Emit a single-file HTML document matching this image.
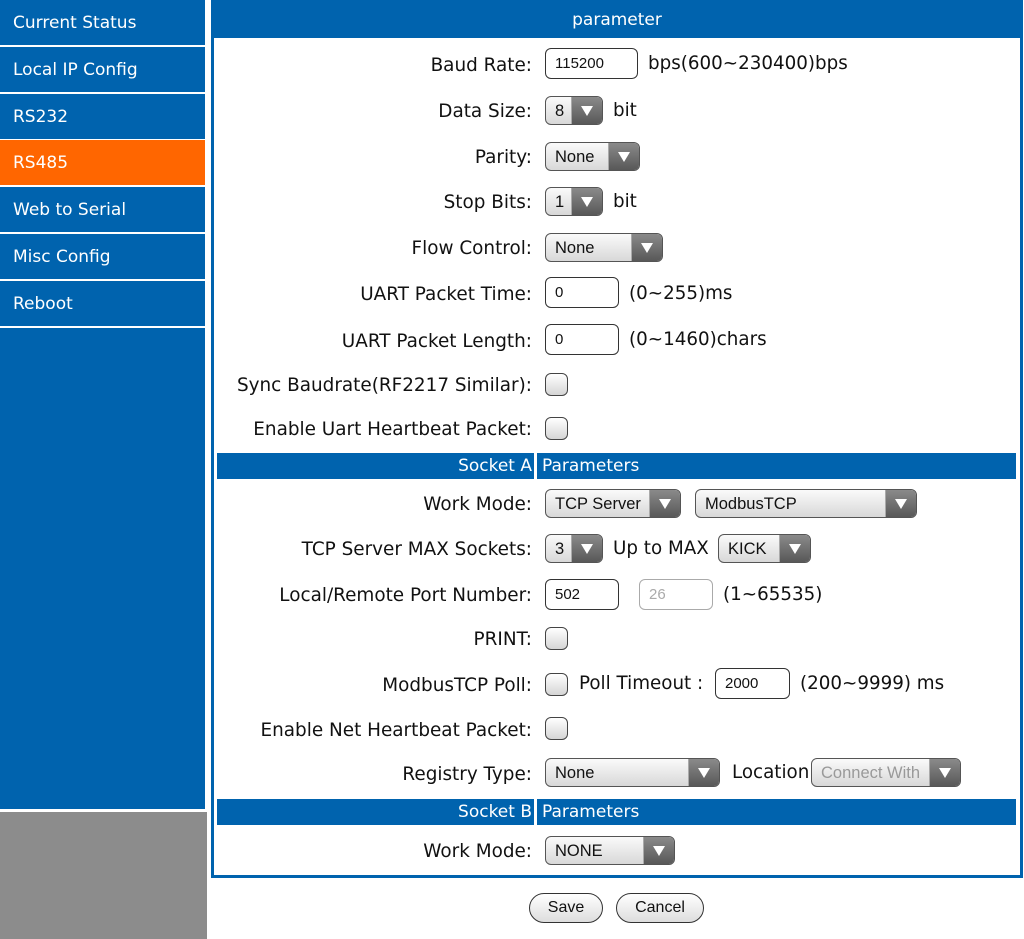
<!DOCTYPE html>
<html><head><meta charset="utf-8"><style>
*{margin:0;padding:0;box-sizing:border-box}
body{width:1024px;height:939px;background:#fff;position:relative;overflow:hidden;font-family:"DejaVu Sans","Liberation Sans",sans-serif;color:#111}
.nav{position:absolute;left:0;width:205px;height:45px;background:#0063ae;color:#fff;font-size:17px;line-height:46px;padding-left:13px}
.a{position:absolute}
.lbl{position:absolute;right:492px;font-size:18.4px;white-space:nowrap;margin-top:0}
.txt{position:absolute;font-size:18.3px;white-space:nowrap;margin-top:0}
.sel{position:absolute;height:29px;border:1px solid #555;border-radius:6px;background:linear-gradient(#fafafa,#d8d8d8);font-family:"Liberation Sans",sans-serif;font-size:16.5px;line-height:28px;padding-left:9px;overflow:hidden;color:#111}
.sel .ar{position:absolute;right:0;top:0;bottom:0;width:31px;background:linear-gradient(#8a8a8a,#585858);border-left:1px solid #aaa}
.sel .ar:after{content:"";position:absolute;left:9px;top:9px;border-left:6px solid transparent;border-right:6px solid transparent;border-top:10px solid #fff}
.inp{position:absolute;height:31px;border:1px solid #333;border-radius:6px;background:#fff;font-family:"Liberation Sans",sans-serif;font-size:15px;line-height:29px;padding-left:9px}
.cb{position:absolute;left:545px;width:23px;height:23px;border:1px solid #444;border-radius:6px;background:linear-gradient(#fff,#d5d5d5)}
.bar{position:absolute;left:217px;width:799px;height:26px;background:#0063ae;color:#fff;font-size:17px;line-height:26px}
.btn{position:absolute;top:893px;height:30px;border:1px solid #333;border-radius:15px;background:linear-gradient(#fff,#ddd);font-family:"Liberation Sans",sans-serif;font-size:16px;line-height:28px;text-align:center}
</style></head><body>
<div class="nav" style="top:0">Current Status</div>
<div class="nav" style="top:47px">Local IP Config</div>
<div class="nav" style="top:94px">RS232</div>
<div class="nav" style="top:140px;background:#ff6600">RS485</div>
<div class="nav" style="top:187px">Web to Serial</div>
<div class="nav" style="top:234px">Misc Config</div>
<div class="nav" style="top:281px">Reboot</div>
<div class="a" style="left:0;top:328px;width:205px;height:481px;background:#0063ae"></div>
<div class="a" style="left:0;top:812px;width:207px;height:127px;background:#8c8c8c"></div>

<div class="a" style="left:211px;top:0;width:812px;height:878px;border:3px solid #0063ae;border-top:1px solid #0063ae"></div>
<div class="a" style="left:211px;top:0;width:812px;height:38px;background:#0063ae;color:#fff;font-size:17px;text-align:center;line-height:41px">parameter</div>

<div class="lbl" style="top:55px">Baud Rate:</div>
<div class="inp" style="left:545px;top:48px;width:93px">115200</div>
<div class="txt" style="left:648px;top:53px">bps(600~230400)bps</div>

<div class="lbl" style="top:101px">Data Size:</div>
<div class="sel" style="left:545px;top:96px;width:58px">8<div class="ar"></div></div>
<div class="txt" style="left:613px;top:100px">bit</div>

<div class="lbl" style="top:147px">Parity:</div>
<div class="sel" style="left:545px;top:142px;width:95px">None<div class="ar"></div></div>

<div class="lbl" style="top:192px">Stop Bits:</div>
<div class="sel" style="left:545px;top:187px;width:58px">1<div class="ar"></div></div>
<div class="txt" style="left:613px;top:191px">bit</div>

<div class="lbl" style="top:238px">Flow Control:</div>
<div class="sel" style="left:545px;top:233px;width:118px">None<div class="ar"></div></div>

<div class="lbl" style="top:284px">UART Packet Time:</div>
<div class="inp" style="left:545px;top:277px;width:74px">0</div>
<div class="txt" style="left:629px;top:283px">(0~255)ms</div>

<div class="lbl" style="top:331px">UART Packet Length:</div>
<div class="inp" style="left:545px;top:324px;width:74px">0</div>
<div class="txt" style="left:629px;top:329px">(0~1460)chars</div>

<div class="lbl" style="top:375px">Sync Baudrate(RF2217 Similar):</div>
<div class="cb" style="top:373px"></div>
<div class="lbl" style="top:419px">Enable Uart Heartbeat Packet:</div>
<div class="cb" style="top:417px"></div>

<div class="bar" style="top:453px"><span style="position:absolute;right:484px">Socket A</span><span style="position:absolute;left:317px;width:3px;top:0;bottom:0;background:#fff"></span><span style="position:absolute;left:325px">Parameters</span></div>

<div class="lbl" style="top:494px">Work Mode:</div>
<div class="sel" style="left:545px;top:489px;width:136px">TCP Server<div class="ar"></div></div>
<div class="sel" style="left:695px;top:489px;width:222px">ModbusTCP<div class="ar"></div></div>

<div class="lbl" style="top:539px">TCP Server MAX Sockets:</div>
<div class="sel" style="left:545px;top:534px;width:58px">3<div class="ar"></div></div>
<div class="txt" style="left:613px;top:538px">Up to MAX</div>
<div class="sel" style="left:718px;top:534px;width:93px">KICK<div class="ar"></div></div>

<div class="lbl" style="top:585px">Local/Remote Port Number:</div>
<div class="inp" style="left:545px;top:579px;width:74px">502</div>
<div class="inp" style="left:639px;top:579px;width:74px;border-color:#aaa;color:#aaa">26</div>
<div class="txt" style="left:723px;top:584px">(1~65535)</div>

<div class="lbl" style="top:629px">PRINT:</div>
<div class="cb" style="top:627px"></div>

<div class="lbl" style="top:675px">ModbusTCP Poll:</div>
<div class="cb" style="top:673px"></div>
<div class="txt" style="left:579px;top:673px">Poll Timeout :</div>
<div class="inp" style="left:715px;top:668px;width:75px">2000</div>
<div class="txt" style="left:800px;top:673px">(200~9999) ms</div>

<div class="lbl" style="top:720px">Enable Net Heartbeat Packet:</div>
<div class="cb" style="top:717px"></div>

<div class="lbl" style="top:764px">Registry Type:</div>
<div class="sel" style="left:545px;top:758px;width:175px">None<div class="ar"></div></div>
<div class="txt" style="left:732px;top:762px">Location</div>
<div class="sel" style="left:811px;top:758px;width:150px;color:#999">Connect With<div class="ar"></div></div>

<div class="bar" style="top:799px"><span style="position:absolute;right:484px">Socket B</span><span style="position:absolute;left:317px;width:3px;top:0;bottom:0;background:#fff"></span><span style="position:absolute;left:325px">Parameters</span></div>

<div class="lbl" style="top:841px">Work Mode:</div>
<div class="sel" style="left:545px;top:836px;width:130px">NONE<div class="ar"></div></div>

<div class="btn" style="left:529px;width:74px">Save</div>
<div class="btn" style="left:616px;width:88px">Cancel</div>
</body></html>
